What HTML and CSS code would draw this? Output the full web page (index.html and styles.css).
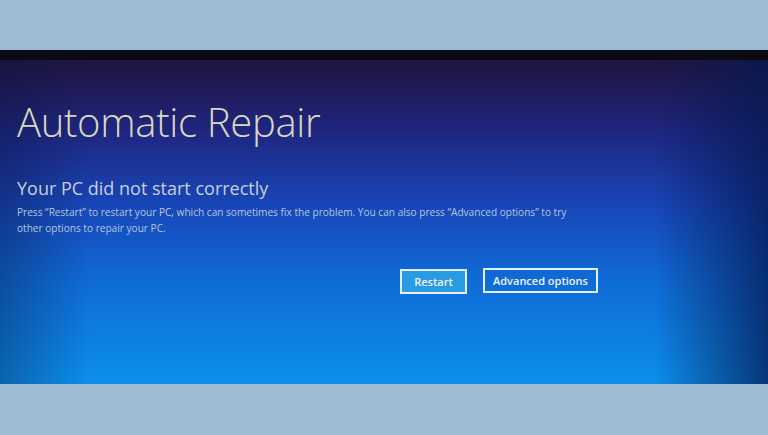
FILE: index.html
```html
<!DOCTYPE html>
<html lang="en">
<head>
  <meta charset="UTF-8" />
  <title>Automatic Repair</title>
  <link rel="stylesheet" href="styles.css">
</head>
<body>
  <div class="photo">
    <div class="bezel"></div>
    <div class="screen">
      <h1>Automatic Repair</h1>
      <h2>Your PC did not start correctly</h2>
      <p>Press “Restart” to restart your PC, which can sometimes fix the problem. You can also press “Advanced options” to try<br>other options to repair your PC.</p>
      <div class="buttons">
        <button class="primary">Restart</button>
        <button>Advanced options</button>
      </div>
    </div>
  </div>
</body>
</html>
```

FILE: styles.css
```css
* { box-sizing: border-box; margin: 0; padding: 0; }

body {
  background: #9cbcd6;
  padding-top: 50px;
  height: 435px;
  font-family: 'Open Sans', sans-serif;
}

.photo {
  height: 334px;
  display: flex;
  flex-direction: column;
}

.bezel {
  height: 10px;
  background: #0b0a12;
}

.screen {
  flex: 1;
  padding: 39px 0 0 17px;
  background:
    linear-gradient(90deg, rgba(5,20,60,0.35) 0%, rgba(5,20,60,0) 12%, rgba(5,20,60,0) 85%, rgba(5,25,80,0.75) 100%),
    linear-gradient(180deg, #21143f 0%, #1f2680 22%, #1846b8 45%, #0f6bd6 68%, #0c90ec 100%);
}

h1 {
  font-weight: 300;
  font-size: 40px;
  line-height: 46px;
  color: #d8d8bf;
  letter-spacing: -0.3px;
}

h2 {
  margin-top: 32px;
  font-weight: 400;
  font-size: 18px;
  line-height: 22px;
  color: #c6d0dc;
}

p {
  margin-top: 5px;
  font-size: 10.1px;
  line-height: 16px;
  color: #b6c6e0;
}

.buttons {
  display: flex;
  gap: 16px;
  margin: 32px 0 0 383px;
  align-items: flex-start;
}

button {
  font-family: 'Open Sans', sans-serif;
  font-size: 11px;
  font-weight: 600;
  color: #eef3fa;
  background: transparent;
  border: 2px solid #e6eef8;
  height: 25px;
  padding: 0 8px;
}

.primary {
  background: #2a9be2;
  width: 67px;
  margin-top: 1px;
}
```
